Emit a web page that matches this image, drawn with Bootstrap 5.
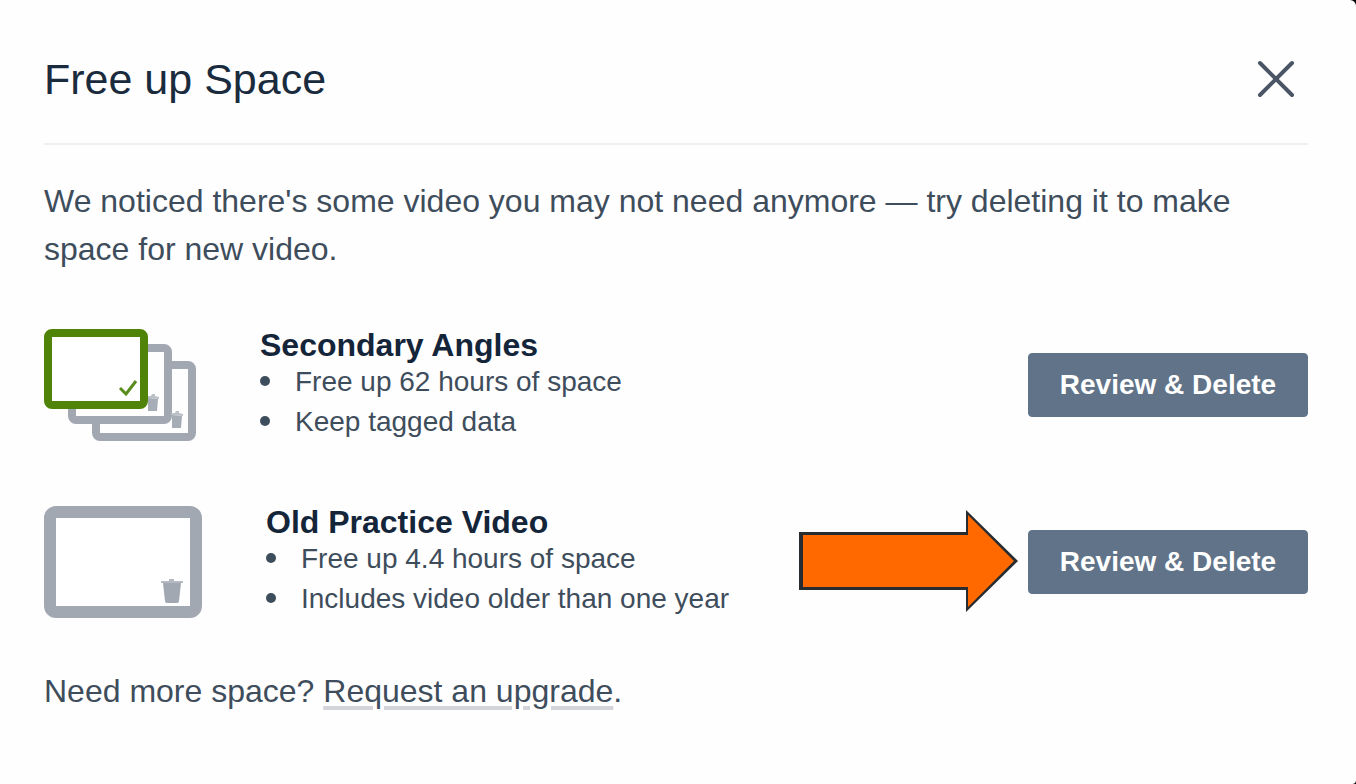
<!DOCTYPE html>
<html lang="en">
<head>
<meta charset="utf-8">
<meta name="viewport" content="width=device-width, initial-scale=1">
<title>Free up Space</title>
<link href="https://cdn.jsdelivr.net/npm/bootstrap@5.3.0/dist/css/bootstrap.min.css" rel="stylesheet">
<style>
  body { background: #000; color: #3e4d5c; font-family: "Liberation Sans", Arial, sans-serif; font-size: 32px; line-height: 48px; }
  .panel { background: #fefefe; border-radius: 0 6px 4px 0; padding: 44px 48px 44px 44px; }
  .panel-head { border-bottom: 2px solid #efeff0; padding-bottom: 29px; margin-bottom: 32px; }
  .panel-title { color: #1a2b3e; font-size: 43px; line-height: 70px; }
  .close-btn { width: 64px; height: 64px; color: #4a5665; }
  .intro { margin-bottom: 48px; }
  .offers { gap: 49px; margin-bottom: 41px; }
  .offer { gap: 64px; min-height: 128px; }
  .offer-title { color: #14253a; font-size: 32px; line-height: 34px; }
  .offer ul { font-size: 28px; line-height: 40px; padding-left: 35px; list-style: none; }
  .offer li::before { content: ""; float: left; width: 10px; height: 10px; margin: 14px 0 0 -35px; border-radius: 50%; background: #3e4d5c; }
  .review-btn { --bs-btn-color: #fff; --bs-btn-bg: #607388; --bs-btn-border-color: #607388; --bs-btn-hover-color: #fff; --bs-btn-hover-bg: #506377; --bs-btn-hover-border-color: #506377; width: 280px; height: 64px; font-size: 28px; line-height: 40px; border-radius: 4px; }
  .upgrade { color: inherit; text-decoration: underline 4px #d2d4da; text-underline-offset: 4px; }
  .pointer-gap { gap: 10px; }
</style>
</head>
<body>
<svg class="d-none">
  <symbol id="bin" viewBox="0 0 22 24">
    <path d="M8 2V0h5v2h9v2H0V2z" fill="#b4bac2"/>
    <path d="M2 4h18l-2 18q0 2-2 2H6q-2 0-2-2z" fill="#a1a8b2"/>
  </symbol>
  <symbol id="bin-small" viewBox="0 0 12 17">
    <path d="M4 2l1-2h3v2l4 1v2L0 4V2z" fill="#bcc1c8"/>
    <path d="M1 4l10 1-1 12H1z" fill="#a6adb6"/>
  </symbol>
</svg>
<main class="panel min-vh-100">
  <header class="panel-head d-flex justify-content-between align-items-center">
    <h1 class="panel-title fw-normal mb-0">Free up Space</h1>
    <button type="button" class="close-btn btn p-0 border-0" aria-label="Close">
      <svg class="d-block" width="64" height="64" fill="none" stroke="currentColor" stroke-width="4" stroke-linecap="round"><path d="M16 16l32 32M48 16L16 48"/></svg>
    </button>
  </header>
  <p class="intro">We noticed there's some video you may not need anymore — try deleting it to make space for new video.</p>

  <div class="offers d-flex flex-column">
    <section class="offer d-flex align-items-center">
      <svg class="flex-shrink-0" width="152" height="112" aria-hidden="true">
        <rect x="52" y="36" width="96" height="72" rx="4" fill="#fefefe" stroke="#a1a8b2" stroke-width="8"/>
        <path d="M56 40h88v64H56z" fill="#fefefe"/>
        <rect x="28" y="19" width="96" height="72" rx="4" fill="#fefefe" stroke="#a1a8b2" stroke-width="8"/>
        <path d="M32 23h88v64H32z" fill="#fefefe"/>
        <use href="#bin-small" x="127" y="82" width="12" height="17"/>
        <use href="#bin-small" x="103" y="65" width="12" height="17"/>
        <rect x="4" y="4" width="96" height="72" rx="4" fill="#fff" stroke="#508408" stroke-width="8"/>
        <path d="M8 8h88v64H8z" fill="#fff"/>
        <path d="M76 59l6 6 10-13" fill="none" stroke="#5a8c1c" stroke-width="3"/>
      </svg>
      <div class="flex-grow-1">
        <h2 class="offer-title fw-bold mb-0">Secondary Angles</h2>
        <ul class="mb-0"><li>Free up 62 hours of space</li><li>Keep tagged data</li></ul>
      </div>
      <button type="button" class="review-btn btn fw-bold p-0">Review &amp; Delete</button>
    </section>

    <section class="offer d-flex align-items-center">
      <svg class="flex-shrink-0" width="158" height="112" aria-hidden="true">
        <rect x="6" y="6" width="146" height="100" rx="6" fill="#fff" stroke="#a1a8b2" stroke-width="12"/>
        <path d="M12 12h134v88H12z" fill="#fff"/>
        <use href="#bin" x="117" y="73" width="22" height="24"/>
      </svg>
      <div class="flex-grow-1">
        <h2 class="offer-title fw-bold mb-0">Old Practice Video</h2>
        <ul class="mb-0"><li>Free up 4.4 hours of space</li><li>Includes video older than one year</li></ul>
      </div>
      <div class="pointer-gap d-flex align-items-center">
        <svg width="219" height="104" aria-hidden="true">
          <path d="M0 22h167V0l52 51-52 51V80H0z" fill="#272c30"/>
          <path d="M4 25h165V5l46 46-46 46V77H4z" fill="#ff6900"/>
        </svg>
        <button type="button" class="review-btn btn fw-bold p-0">Review &amp; Delete</button>
      </div>
    </section>
  </div>

  <p class="mb-0">Need more space? <a class="upgrade" href="#">Request an upgrade</a>.</p>
</main>
<script src="https://cdn.jsdelivr.net/npm/bootstrap@5.3.0/dist/js/bootstrap.bundle.min.js"></script>
</body>
</html>
